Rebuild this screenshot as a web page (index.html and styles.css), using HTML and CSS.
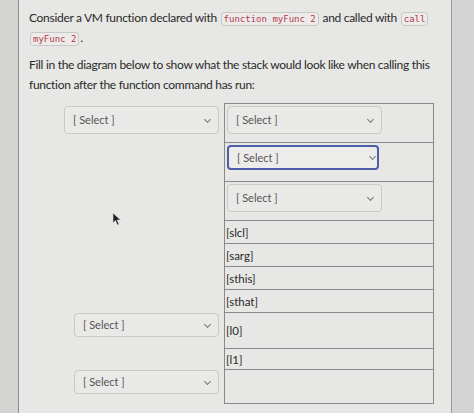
FILE: index.html
```html
<!DOCTYPE html>
<html lang="en">
<head>
    <meta charset="UTF-8">
    <meta name="viewport" content="width=device-width, initial-scale=1.0">
    <title>Quiz - VM Stack</title>
    <link rel="stylesheet" href="styles.css">
</head>
<body>
    <div class="panel">
        <p class="question"><span>Consider a VM function declared with </span><code>function myFunc 2</code><span> and called with </span><code>call myFunc 2</code><span>.</span></p>
        <p class="question">
            Fill in the diagram below to show what the stack would look like when calling this function after the function command has run:
        </p>

        <!-- stack diagram: labels on the left, stack cells on the right -->
        <table class="stack">
            <tr class="row-select">
                <td class="label"><div class="select">[ Select ]</div></td>
                <td class="cell"><div class="select">[ Select ]</div></td>
            </tr>
            <tr class="row-select">
                <td class="label"></td>
                <td class="cell"><div class="select focused">[ Select ]</div></td>
            </tr>
            <tr class="row-select">
                <td class="label"></td>
                <td class="cell"><div class="select">[ Select ]</div></td>
            </tr>
            <tr class="row-text">
                <td class="label"></td>
                <td class="cell">[slcl]</td>
            </tr>
            <tr class="row-text">
                <td class="label"></td>
                <td class="cell">[sarg]</td>
            </tr>
            <tr class="row-text">
                <td class="label"></td>
                <td class="cell">[sthis]</td>
            </tr>
            <tr class="row-text">
                <td class="label"></td>
                <td class="cell">[sthat]</td>
            </tr>
            <tr class="row-local">
                <td class="label"><div class="select small">[ Select ]</div></td>
                <td class="cell">[l0]</td>
            </tr>
            <tr class="row-short">
                <td class="label"></td>
                <td class="cell">[l1]</td>
            </tr>
            <tr class="row-last">
                <td class="label"><div class="select small">[ Select ]</div></td>
                <td class="cell"></td>
            </tr>
        </table>

        <!-- mouse pointer -->
        <svg class="cursor" width="10" height="14" viewBox="0 0 10 14">
            <path d="M1 1 L1 11 L3.5 8.6 L5.4 13 L7 12.3 L5.2 8 L8.6 8 Z" fill="#222" stroke="#ddd" stroke-width="0.6"/>
        </svg>
    </div>
</body>
</html>
```

FILE: styles.css
```css
body {
    margin: 0;
    padding: 0;
    background-color: #d4d4d2;
    font-family: Lato, "Noto Sans", sans-serif;
    color: #2a2a2a;
}

.panel {
    position: relative;
    margin-left: 18px;
    width: 434px;
    height: 413px;
    box-sizing: border-box;
    padding: 8px 0 0 10px;
    background-color: #e7e7e5;
    border-left: 1px solid #8e8e8e;
    border-right: 1px solid #9a9a9a;
}

.question {
    margin: 0 0 7px 0;
    width: 414px;
    font-size: 12px;
    letter-spacing: -0.3px;
    line-height: 20px;
}

code {
    font-family: "DejaVu Sans Mono", monospace;
    font-size: 9px;
    line-height: 12px;
    letter-spacing: 0;
    color: #b5384d;
    background-color: #edebea;
    border: 1px solid #c8c8c6;
    border-radius: 3px;
    margin: 0 1px;
    padding: 1px 2px;
    box-decoration-break: clone;
    -webkit-box-decoration-break: clone;
}

.stack {
    border-collapse: collapse;
    margin-top: 8px;
    margin-left: 35px;
}

.stack td {
    padding: 0;
    vertical-align: top;
}

.stack .label {
    width: 157px;
    padding-right: 3px;
}

.stack .cell {
    width: 206px;
    border: 1px solid #8a8a8a;
    font-size: 11.5px;
    padding-left: 1px;
    vertical-align: middle;
}

.row-select td { height: 36px; }
.row-text td { height: 22px; }
.row-short td { height: 20px; }
.row-local td { height: 35px; }
.row-last td { height: 33px; }

.row-select .label { padding-top: 2px; }
.row-select .cell { padding: 2px 0 0 2px; vertical-align: top; }

.select {
    position: relative;
    box-sizing: border-box;
    width: 155px;
    height: 28px;
    padding-left: 8px;
    line-height: 26px;
    font-size: 11px;
    color: #555;
    background-color: #e9e9e7;
    border: 1px solid #c9c9c7;
    border-radius: 4px;
}

.select::after {
    content: "";
    position: absolute;
    right: 8px;
    top: 10px;
    width: 4px;
    height: 4px;
    border-right: 1px solid #777;
    border-bottom: 1px solid #777;
    transform: rotate(45deg);
}

.select.focused {
    height: 25px;
    width: 152px;
    line-height: 21px;
    border: 2px solid #4d5da8;
    background-color: #ececea;
}

.select.focused::after {
    top: 7px;
    right: 2px;
}

.select.small {
    width: 145px;
    height: 24px;
    line-height: 22px;
    margin-left: 10px;
}

.select.small::after {
    top: 8px;
}

.cursor {
    position: absolute;
    left: 93px;
    top: 212px;
}
```
